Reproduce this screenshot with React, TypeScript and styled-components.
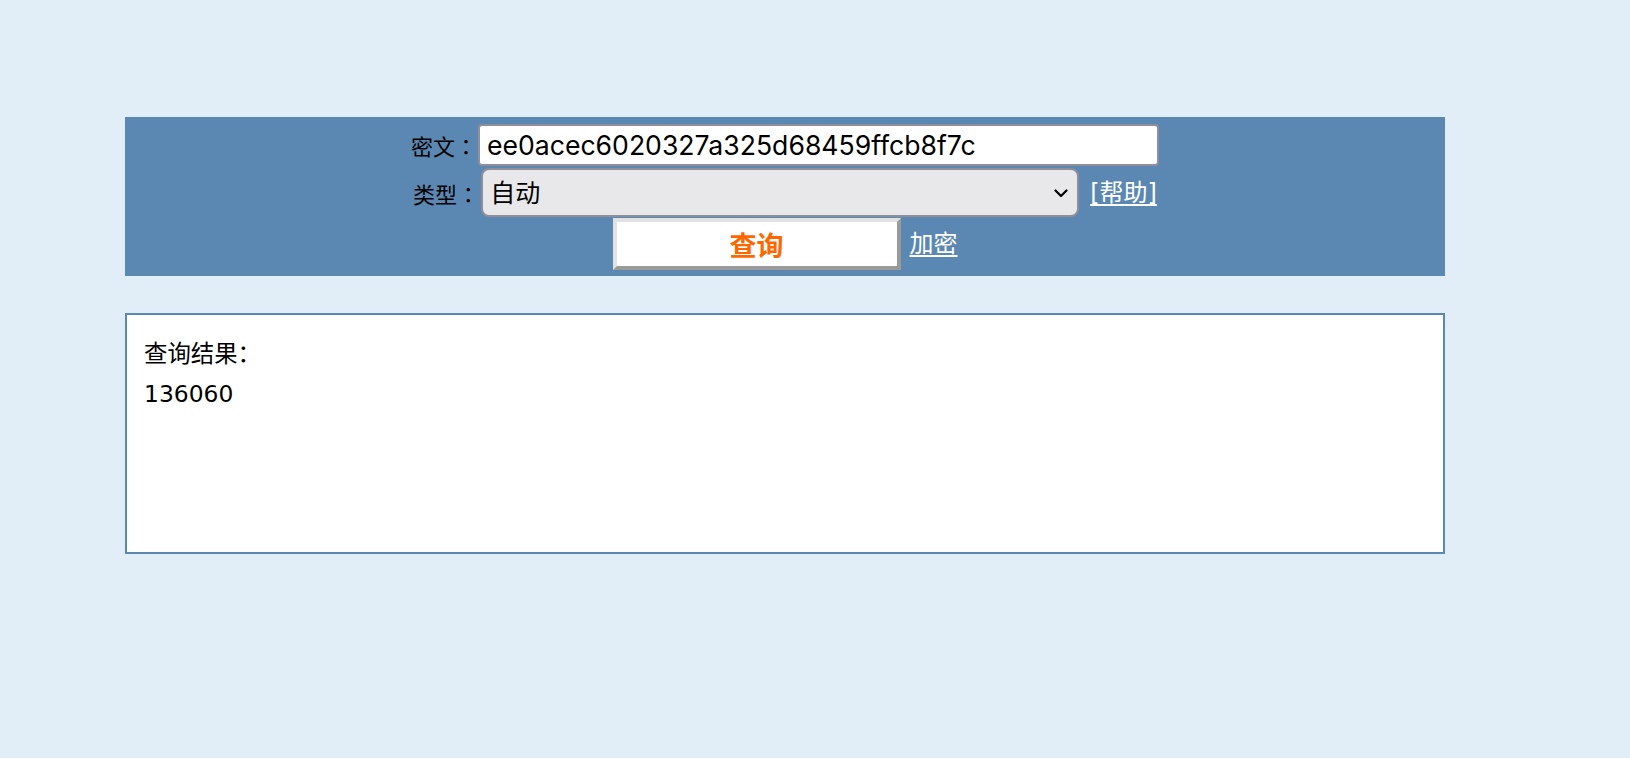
import React from "react";
import styled, { createGlobalStyle } from "styled-components";

const GlobalStyle = createGlobalStyle`
  html, body {
    margin: 0;
    padding: 0;
    background: #e1eef7;
  }
  body {
    font-family: "DejaVu Sans", "Noto Sans CJK SC", sans-serif;
    color: #000;
  }
`;

const Page = styled.div`
  width: 1320px;
  padding: 117px 0 0 125px;
`;

const Panel = styled.form`
  background: #5b88b2;
  padding: 7px 0 6px;
  display: flex;
  flex-direction: column;
  align-items: center;
  margin: 0;
`;

const Row = styled.div<{ $below: number; $gap: number }>`
  display: flex;
  align-items: center;
  justify-content: center;
  gap: ${(p) => p.$gap}px;
  margin-bottom: ${(p) => p.$below}px;
`;

const Label = styled.label<{ $space: number }>`
  font-family: "Noto Sans CJK SC", sans-serif;
  font-size: 22px;
  line-height: 1;
  color: #000;
  white-space: nowrap;
  margin-right: ${(p) => p.$space}px;
`;

const Colon = styled.span`
  font-family: "Noto Sans CJK TC", "Noto Sans CJK JP", sans-serif;
`;

const TextInput = styled.input`
  box-sizing: border-box;
  width: 681px;
  height: 42px;
  padding: 0 7px;
  margin: 0;
  border: 2px solid #8f8e9a;
  border-radius: 4px;
  background: #fff;
  font-family: "Inter", "Noto Sans CJK SC", sans-serif;
  font-size: 26.6px;
  color: #000;
  outline: none;
`;

const SelectWrap = styled.span`
  position: relative;
  display: inline-flex;
`;

const Select = styled.select`
  box-sizing: border-box;
  width: 598px;
  height: 49px;
  margin: 0;
  padding: 0 40px 0 7px;
  appearance: none;
  -webkit-appearance: none;
  border: 2px solid #8f8e9a;
  border-radius: 8px;
  background: #e8e8eb;
  font-family: "Inter", "Noto Sans CJK SC", sans-serif;
  font-size: 25px;
  color: #000;
  outline: none;
`;

const Chevron = styled.svg`
  position: absolute;
  right: 11px;
  top: 50%;
  width: 14px;
  height: 9px;
  margin-top: -4px;
  pointer-events: none;
`;

const Link = styled.a<{ $space?: number }>`
  font-family: "DejaVu Sans", "Noto Sans CJK SC", sans-serif;
  font-size: 24px;
  line-height: 1;
  color: #fff;
  text-decoration: underline;
  text-decoration-skip-ink: none;
  text-underline-offset: 3px;
  white-space: nowrap;
  cursor: pointer;
  margin-left: ${(p) => p.$space ?? 0}px;
`;

const SubmitButton = styled.button`
  box-sizing: border-box;
  width: 288px;
  height: 52px;
  margin: 0;
  padding: 0;
  background: #fff;
  border: 4px solid;
  border-color: #e2e2e2 #9a9a9a #9a9a9a #e2e2e2;
  font-family: "Noto Sans CJK SC", sans-serif;
  font-size: 27px;
  font-weight: 700;
  color: #ff6600;
  cursor: pointer;
`;

const ResultBox = styled.div`
  box-sizing: border-box;
  margin-top: 37px;
  height: 241px;
  background: #fff;
  border: 2px solid #5b88b2;
  padding: 19px 17px;
  font-family: "DejaVu Sans", "Noto Sans CJK SC", sans-serif;
  font-size: 23.4px;
  line-height: 40px;
  color: #000;
`;

const ResultLine = styled.div``;

export default function App() {
  return (
    <>
      <GlobalStyle />
      <Page>
        <Panel onSubmit={(e) => e.preventDefault()}>
          <Row $below={2} $gap={0}>
            <Label htmlFor="hash" $space={1}>
              密文<Colon>：</Colon>
            </Label>
            <TextInput id="hash" defaultValue="ee0acec6020327a325d68459ffcb8f7c" />
          </Row>
          <Row $below={1} $gap={0}>
            <Label htmlFor="type" $space={2}>
              类型<Colon>：</Colon>
            </Label>
            <SelectWrap>
              <Select id="type" defaultValue="auto">
                <option value="auto">自动</option>
              </Select>
              <Chevron viewBox="0 0 14 9" fill="none">
                <path d="M1.5 1.5 L7 7 L12.5 1.5" stroke="#000" strokeWidth="2.2" strokeLinecap="round" strokeLinejoin="round" />
              </Chevron>
            </SelectWrap>
            <Link $space={11}>[帮助]</Link>
          </Row>
          <Row $below={0} $gap={9}>
            <SubmitButton type="submit">查询</SubmitButton>
            <Link>加密</Link>
          </Row>
        </Panel>
        <ResultBox>
          <ResultLine>查询结果：</ResultLine>
          <ResultLine>136060</ResultLine>
        </ResultBox>
      </Page>
    </>
  );
}
